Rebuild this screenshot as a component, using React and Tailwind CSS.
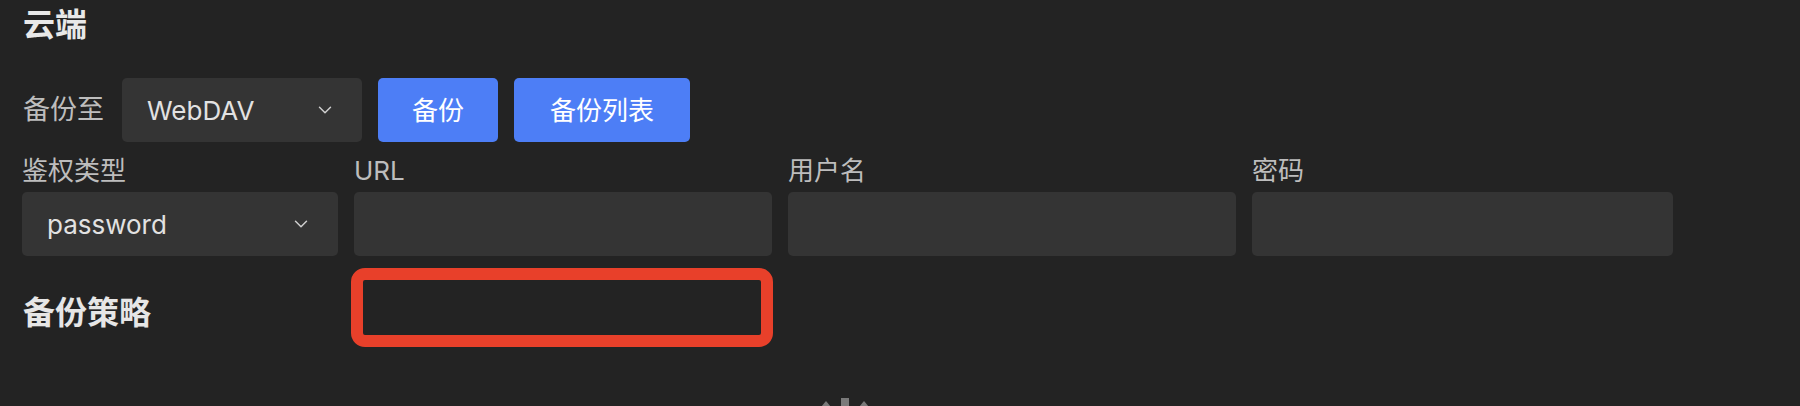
import { ChevronDown } from 'lucide-react';

const font = { fontFamily: '"Inter", "Noto Sans CJK SC", sans-serif' };

function Select({ value, width }) {
  return (
    <div
      className="flex h-[64px] items-center justify-between rounded-[5px] bg-[#343434] pl-[25px] pr-[26px] text-[26px] text-[#e2e2e2]"
      style={{ width }}>
      <span>{value}</span>
      <ChevronDown size={22} strokeWidth={1.6} className="text-[#cfcfcf]" />
    </div>);

}

function Field({ label, width, children }) {
  return (
    <div className="flex flex-col" style={{ width }}>
      <div className="flex h-[50px] items-end pb-[8px] text-[26px] leading-[26px] text-[#bdbdbd]">
        {label}
      </div>
      {children || <div className="h-[64px] rounded-[5px] bg-[#343434]" />}
    </div>);

}

export default function App() {
  return (
    <div className="h-[406px] w-full overflow-hidden bg-[#232323] pl-[22px]" style={font}>
      <div className="flex h-[48px] items-center pl-[1px] pt-[2px] text-[32px] font-semibold text-[#e8e8e8]">
        云端
      </div>

      <div className="mt-[30px] flex h-[64px] items-center">
        <span className="w-[100px] pl-[1px] text-[27px] text-[#bdbdbd]">备份至</span>
        <Select value="WebDAV" width={240} />
        <button className="ml-[16px] h-[64px] w-[120px] rounded-[5px] bg-[#4d7ef6] text-[26px] text-white">
          备份
        </button>
        <button className="ml-[16px] h-[64px] w-[176px] rounded-[5px] bg-[#4d7ef6] text-[26px] text-white">
          备份列表
        </button>
      </div>

      <div className="flex gap-[16px]">
        <Field label="鉴权类型" width={316}>
          <Select value="password" width={316} />
        </Field>
        <Field label="URL" width={418} />
        <Field label="用户名" width={448} />
        <Field label="密码" width={421} />
      </div>

      <div className="mt-[12px] flex">
        <div className="flex h-[79px] w-[329px] items-center pl-[1px] pt-[10px] text-[32px] font-semibold text-[#e6e6e6]">
          备份策略
        </div>
        <div className="h-[79px] w-[422px] rounded-[14px] border-[12px] border-[#e8402a]" />
      </div>

      <div className="ml-[799px] mt-[51px] h-[20px]">
        <svg width="52" height="20" viewBox="0 0 52 20" fill="#7a7a7a">
          <rect x="20" y="0" width="8" height="20" />
          <polygon points="0,9 5,3 10,9" />
          <polygon points="38,9 43,3 48,9" />
        </svg>
      </div>
    </div>);

}
